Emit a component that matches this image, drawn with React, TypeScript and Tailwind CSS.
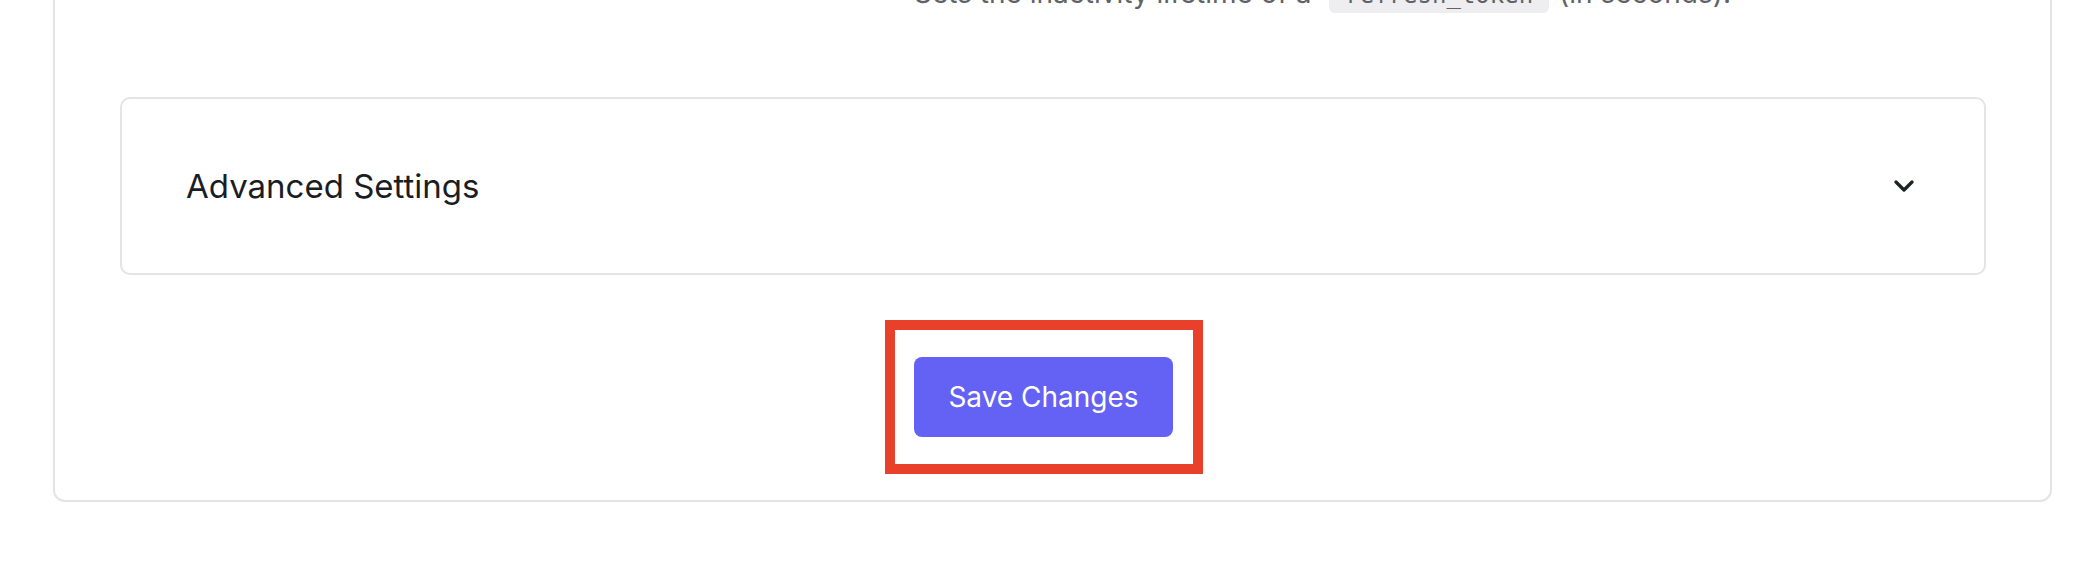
import React from "react";

function ChevronDown() {
  return (
    <svg width="32" height="32" viewBox="0 0 24 24" fill="none" stroke="#1f2328" strokeWidth="2.5" strokeLinecap="round" strokeLinejoin="round">
      <path d="m6 9 6 6 6-6" />
    </svg>
  );
}

export default function App() {
  return (
    <div className="w-[2090px] h-[572px] overflow-hidden bg-white" style={{ fontFamily: "Inter, 'Noto Sans', sans-serif" }}>
      <div className="ml-[53px] w-[1999px] -mt-[60px] border-2 border-[#e4e4e7] rounded-[12px] pt-[31px] pl-[65px] pr-[64px] pb-[26px]">
        <p className="ml-[794px] text-[28px] leading-[40px] text-[#5f6368] whitespace-nowrap">
          Sets the inactivity lifetime of a{" "}
          <code className="ml-[10px] mr-[2px] bg-[#eeeef0] rounded-[6px] px-[16px] py-[4px] text-[24px] text-[#5f6368]" style={{ fontFamily: "'DejaVu Sans Mono', 'Liberation Mono', monospace" }}>
            refresh_token
          </code>{" "}
          (in seconds).
        </p>

        <div className="mt-[82px] h-[178px] border-2 border-[#e4e4e7] rounded-[10px] flex items-center justify-between px-[64px]">
          <span className="text-[33px] leading-[48px] font-normal text-[#1a1d23]">Advanced Settings</span>
          <ChevronDown />
        </div>

        <div className="mt-[45px] flex justify-center pr-[18px]">
          <div className="border-[10px] border-[#e8402a] pl-[19px] pr-[20px] py-[27px]">
            <button className="w-[259px] h-[80px] rounded-[8px] bg-[#6461f5] text-white text-[28px] font-normal flex items-center justify-center">
              Save Changes
            </button>
          </div>
        </div>
      </div>
    </div>
  );
}
